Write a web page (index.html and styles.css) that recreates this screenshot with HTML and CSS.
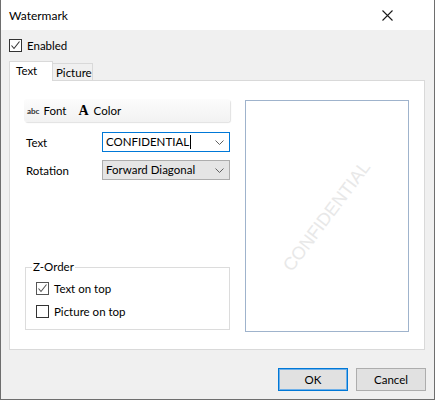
FILE: index.html
```html
<!DOCTYPE html>
<html lang="en">
<head>
  <meta charset="UTF-8">
  <title>Watermark</title>
  <link rel="stylesheet" href="styles.css">
</head>
<body>
  <div class="window">
    <!-- 제목 표시줄 -->
    <div class="titlebar">
      <span class="title">Watermark</span>
      <svg class="close" width="11" height="11" viewBox="0 0 11 11">
        <path d="M0.5 0.5 L10.5 10.5 M10.5 0.5 L0.5 10.5" stroke="#1a1a1a" stroke-width="1.1" fill="none"/>
      </svg>
    </div>

    <div class="main">
      <label class="check enabled">
        <span class="box">
          <svg width="11" height="11" viewBox="0 0 11 11"><path d="M1.5 5.5 L4 8.5 L9.5 1.5" stroke="#333" stroke-width="1.1" fill="none"/></svg>
        </span>
        Enabled
      </label>

      <div class="tabs">
        <div class="tab active">Text</div>
        <div class="tab">Picture</div>
      </div>

      <div class="panel">
        <div class="left">
          <div class="toolbar">
            <span class="abc">abc</span><span class="tool-label">Font</span>
            <span class="big-a">A</span><span class="tool-label">Color</span>
          </div>

          <div class="row first">
            <span class="label">Text</span>
            <div class="combo edit">
              <span class="value">CONFIDENTIAL</span><span class="caret"></span>
              <svg class="chev" width="9" height="5" viewBox="0 0 9 5"><path d="M0.5 0.5 L4.5 4.5 L8.5 0.5" stroke="#606060" fill="none"/></svg>
            </div>
          </div>
          <div class="row">
            <span class="label">Rotation</span>
            <div class="combo list">
              <span class="value">Forward Diagonal</span>
              <svg class="chev" width="9" height="5" viewBox="0 0 9 5"><path d="M0.5 0.5 L4.5 4.5 L8.5 0.5" stroke="#606060" fill="none"/></svg>
            </div>
          </div>

          <fieldset class="group">
            <legend>Z-Order</legend>
            <label class="check opt">
              <span class="box soft">
                <svg width="11" height="11" viewBox="0 0 11 11"><path d="M1.5 5.5 L4 8.5 L9.5 1.5" stroke="#555" stroke-width="1.1" fill="none"/></svg>
              </span>
              Text on top
            </label>
            <label class="check opt">
              <span class="box"></span>
              Picture on top
            </label>
          </fieldset>
        </div>

        <div class="preview">
          <span class="mark">CONFIDENTIAL</span>
        </div>
      </div>

      <div class="buttons">
        <button class="btn default">OK</button>
        <button class="btn">Cancel</button>
      </div>
    </div>
  </div>
</body>
</html>
```

FILE: styles.css
```css
body {
  margin: 0;
  font-family: "Segoe UI", Lato, sans-serif;
  font-size: 11.5px;
  color: #000;
}
.window {
  width: 435px;
  height: 400px;
  box-sizing: border-box;
  border: 1px solid #6e6e6e;
  border-top: 0;
  background: #f0f0f0;
  overflow: hidden;
}

/* 제목 표시줄 */
.titlebar {
  height: 30px;
  background: #fff;
  display: flex;
  align-items: center;
  padding-left: 8px;
}
.title {
  flex: 1;
  font-size: 12px;
}
.close {
  margin-right: 41px;
}

.main {
  padding: 0 9px 0 8px;
}

/* 체크박스 */
.check {
  display: flex;
  align-items: center;
}
.box {
  width: 11px;
  height: 11px;
  border: 1px solid #333;
  background: #fff;
  display: flex;
}
.box.soft {
  border-color: #555;
}
.enabled {
  margin-top: 9px;
  height: 13px;
  gap: 5px;
}

/* 탭 */
.tabs {
  display: flex;
  align-items: flex-end;
  margin-top: 9px;
  height: 19px;
  position: relative;
  z-index: 1;
}
.tab {
  height: 17px;
  box-sizing: border-box;
  border: 1px solid #d9d9d9;
  border-bottom: 0;
  border-left: 0;
  padding-left: 3px;
  width: 40px;
  line-height: 17px;
  background: #f0f0f0;
}
.tab.active {
  height: 20px;
  margin-bottom: -1px;
  border-left: 1px solid #d9d9d9;
  background: #fff;
  width: 44px;
  padding-left: 6px;
  line-height: 17px;
}

.panel {
  display: flex;
  background: #fff;
  border: 1px solid #d9d9d9;
  padding: 18px 15px 17px 14px;
  height: 233px;
}
.left {
  width: 206px;
  display: flex;
  flex-direction: column;
}

.toolbar {
  height: 23px;
  box-sizing: border-box;
  border-radius: 3px;
  background: linear-gradient(#fcfcfc, #f2f2f2);
  box-shadow: 1px 1px 1px rgba(0, 0, 0, 0.12);
  display: flex;
  align-items: center;
  padding-left: 3px;
}
.abc {
  font-size: 8px;
  font-weight: bold;
  color: #333;
  margin-right: 4px;
}
.big-a {
  font-family: "Liberation Serif", serif;
  font-weight: bold;
  font-size: 14px;
  margin: 0 5px 0 12px;
}

.row {
  display: flex;
  align-items: center;
  margin-top: 8px;
}
.row.first {
  margin-top: 10px;
}
.label {
  width: 76px;
  padding-left: 2px;
}
.combo {
  flex: 1;
  height: 20px;
  box-sizing: border-box;
  display: flex;
  align-items: center;
  padding-left: 3px;
  padding-right: 5px;
}
.combo .value {
  line-height: 14px;
}
.combo .chev {
  margin-left: auto;
}
.edit {
  border: 1px solid #0078d7;
  background: #fff;
}
.caret {
  width: 1px;
  height: 14px;
  background: #000;
  margin-left: 1px;
}
.list {
  border: 1px solid #adadad;
  background: #e5e5e5;
}

/* 그룹 상자 */
.group {
  margin: auto 0 2px 1px;
  border: 1px solid #dcdcdc;
  padding: 2px 10px 6px 10px;
}
.group legend {
  padding: 0 1px;
  margin-left: -4px;
  line-height: 16px;
}
.opt {
  height: 23px;
  gap: 5px;
}

.preview {
  margin: 1px 0 0 15px;
  width: 164px;
  height: 232px;
  box-sizing: border-box;
  border: 1px solid #9fb3cc;
  background: #fff;
  display: flex;
  align-items: center;
  justify-content: center;
}
.mark {
  font-family: "Liberation Sans", sans-serif;
  font-size: 18px;
  color: #e8e8e8;
  transform: rotate(-53deg);
  white-space: nowrap;
}

/* 버튼 */
.buttons {
  display: flex;
  justify-content: flex-end;
  gap: 8px;
  margin: 18px -1px 0 0;
}
.btn {
  width: 70px;
  height: 23px;
  font: inherit;
  background: #e1e1e1;
  border: 1px solid #adadad;
  padding: 0;
  color: #000;
}
.btn.default {
  border-color: #0078d7;
  box-shadow: inset 0 0 0 1px #6fb0e8;
}
```
